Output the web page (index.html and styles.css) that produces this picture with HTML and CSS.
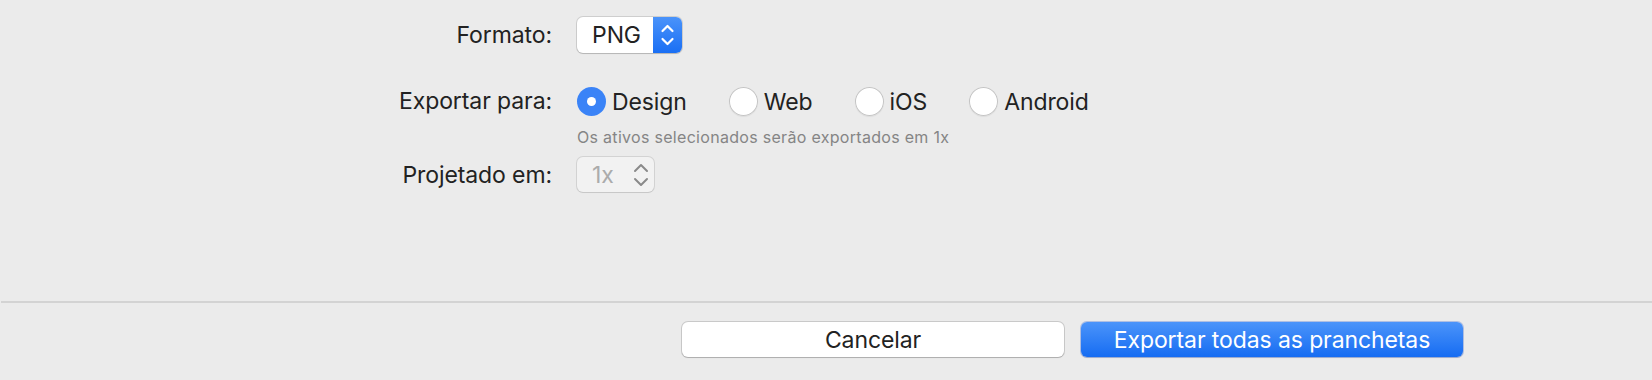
FILE: index.html
```html
<!DOCTYPE html>
<html lang="pt">
<head>
  <meta charset="UTF-8" />
  <title>Exportar pranchetas</title>
  <link rel="stylesheet" href="styles.css">
</head>
<body>
  <div class="dialog">
    <div class="content">
      <div class="form">
        <label class="label">Formato:</label>
        <div class="popup">
          <span class="popup-value">PNG</span>
          <span class="popup-arrows">
            <svg width="29" height="36" viewBox="0 0 29 36">
              <polyline points="9.5,14 14.5,9 19.5,14" />
              <polyline points="9.5,22 14.5,27 19.5,22" />
            </svg>
          </span>
        </div>

        <label class="label row-export">Exportar para:</label>
        <div class="radios row-export">
          <span class="radio-item"><span class="radio checked"></span>Design</span>
          <span class="radio-item"><span class="radio"></span>Web</span>
          <span class="radio-item"><span class="radio"></span>iOS</span>
          <span class="radio-item"><span class="radio"></span>Android</span>
        </div>

        <span></span>
        <p class="hint">Os ativos selecionados serão exportados em 1x</p>

        <label class="label row-design">Projetado em:</label>
        <div class="stepper row-design">
          <span class="stepper-value">1x</span>
          <svg width="16" height="24" viewBox="0 0 16 24">
            <polyline points="2,8 8,2 14,8" />
            <polyline points="2,16 8,22 14,16" />
          </svg>
        </div>
      </div>
    </div>

    <div class="divider"></div>

    <footer class="footer">
      <button class="btn">Cancelar</button>
      <button class="btn btn-primary">Exportar todas as pranchetas</button>
    </footer>
  </div>
</body>
</html>
```

FILE: styles.css
```css
* {
  box-sizing: border-box;
  margin: 0;
  padding: 0;
}

html, body {
  height: 100%;
}

body {
  background-color: #ebebeb;
  font-family: 'Inter', 'Liberation Sans', sans-serif;
  color: #222;
  font-size: 23px;
  letter-spacing: -0.1px;
}

.dialog {
  display: flex;
  flex-direction: column;
}

.content {
  height: 300px;
  padding-top: 17px;
}

.form {
  display: grid;
  grid-template-columns: 552px auto;
  column-gap: 25px;
  align-items: center;
}

.label {
  text-align: right;
}

/* Format popup */
.popup {
  display: flex;
  width: 105px;
  height: 36px;
  background: white;
  border-radius: 6px;
  box-shadow: 0 0 0 1px rgba(0, 0, 0, 0.12), 0 1px 1px rgba(0, 0, 0, 0.12);
  overflow: hidden;
}

.popup-value {
  flex: 1;
  text-align: center;
  line-height: 37px;
  padding-left: 3px;
}

.popup-arrows {
  width: 29px;
  background: linear-gradient(#4a93fa, #1a6ff4);
}

.popup-arrows polyline {
  fill: none;
  stroke: white;
  stroke-width: 2.2;
  stroke-linecap: round;
  stroke-linejoin: round;
}

/* Radio group */
.row-export {
  margin-top: 33px;
}

.radios {
  display: flex;
  gap: 42px;
  height: 30px;
  align-items: center;
}

.radio-item {
  display: flex;
  align-items: center;
  gap: 6px;
  padding-top: 1px;
}

.radio {
  width: 29px;
  height: 29px;
  margin-top: -1px;
  border-radius: 50%;
  background: white;
  box-shadow: inset 0 0 0 1px #c4c4c4, 0 1px 1px rgba(0, 0, 0, 0.06);
  display: flex;
  align-items: center;
  justify-content: center;
}

.radio.checked {
  background: #3a83f7;
  box-shadow: none;
}

.radio.checked::after {
  content: "";
  width: 9px;
  height: 9px;
  border-radius: 50%;
  background: white;
}

.hint {
  font-size: 16px;
  line-height: 22px;
  margin-top: 10px;
  color: #858585;
  letter-spacing: 0.3px;
}

/* Disabled stepper */
.row-design {
  margin-top: 9px;
}

.stepper {
  display: flex;
  align-items: center;
  width: 77px;
  height: 35px;
  background: #f2f2f2;
  border-radius: 6px;
  box-shadow: 0 0 0 1px rgba(0, 0, 0, 0.1), 0 1px 1px rgba(0, 0, 0, 0.06);
  padding-left: 15px;
}

.stepper-value {
  color: #ababab;
  width: 41px;
}

.stepper polyline {
  fill: none;
  stroke: #8a8a8a;
  stroke-width: 2;
  stroke-linecap: round;
  stroke-linejoin: round;
}

.divider {
  height: 2px;
  margin-top: 1px;
  margin-left: 1px;
  background-color: #d3d3d3;
}

/* Footer buttons */
.footer {
  display: flex;
  justify-content: flex-end;
  gap: 17px;
  padding: 19px 189px 0 0;
}

.btn {
  width: 382px;
  height: 35px;
  font-family: 'Inter', 'Liberation Sans', sans-serif;
  font-size: 23px;
  letter-spacing: -0.1px;
  color: #222;
  background: white;
  border: none;
  border-radius: 6px;
  box-shadow: 0 0 0 1px rgba(0, 0, 0, 0.14), 0 1px 1px rgba(0, 0, 0, 0.14);
}

.btn-primary {
  color: white;
  background: linear-gradient(#4b94fa, #166cf2);
  box-shadow: 0 0 0 1px rgba(0, 60, 200, 0.25), 0 1px 1px rgba(0, 0, 0, 0.12);
}
```
